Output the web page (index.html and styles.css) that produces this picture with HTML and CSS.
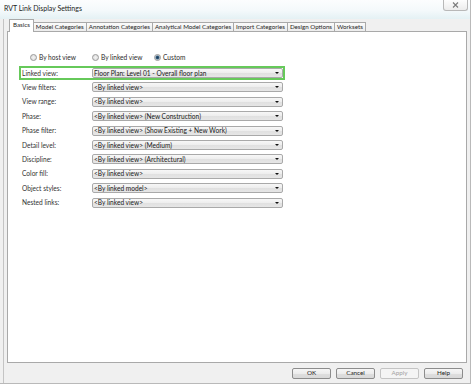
FILE: index.html
```html
<!DOCTYPE html>
<html>
<head>
<meta charset="utf-8">
<title>RVT Link Display Settings</title>
<link rel="stylesheet" href="styles.css">
</head>
<body>
<div class="window">
  <div class="titlebar">
    <span class="title">RVT Link Display Settings</span>
    <div class="close">
      <svg width="9" height="6" viewBox="0 0 9 6"><path d="M2 0.5 L7 5.5 M7 0.5 L2 5.5" stroke="#7a7a7a" stroke-width="1.1" fill="none"/></svg>
    </div>
  </div>
  <div class="main">
    <div class="tabs">
      <div class="tab active">Basics</div>
      <div class="tab">Model Categories</div>
      <div class="tab">Annotation Categories</div>
      <div class="tab">Analytical Model Categories</div>
      <div class="tab">Import Categories</div>
      <div class="tab">Design Options</div>
      <div class="tab">Worksets</div>
    </div>
    <div class="panel">
      <div class="radios">
        <div class="radio-item"><span class="radio"></span><span>By host view</span></div>
        <div class="radio-item"><span class="radio"></span><span>By linked view</span></div>
        <div class="radio-item"><span class="radio checked"></span><span>Custom</span></div>
      </div>
      <div class="rows">
        <div class="row hl"><span class="label">Linked view:</span><div class="combo"><span>Floor Plan: Level 01 - Overall floor plan</span><span class="arrow"></span></div></div>
        <div class="row"><span class="label">View filters:</span><div class="combo"><span>&lt;By linked view&gt;</span><span class="arrow"></span></div></div>
        <div class="row"><span class="label">View range:</span><div class="combo"><span>&lt;By linked view&gt;</span><span class="arrow"></span></div></div>
        <div class="row"><span class="label">Phase:</span><div class="combo"><span>&lt;By linked view&gt; (New Construction)</span><span class="arrow"></span></div></div>
        <div class="row"><span class="label">Phase filter:</span><div class="combo"><span>&lt;By linked view&gt; (Show Existing + New Work)</span><span class="arrow"></span></div></div>
        <div class="row"><span class="label">Detail level:</span><div class="combo"><span>&lt;By linked view&gt; (Medium)</span><span class="arrow"></span></div></div>
        <div class="row"><span class="label">Discipline:</span><div class="combo"><span>&lt;By linked view&gt; (Architectural)</span><span class="arrow"></span></div></div>
        <div class="row"><span class="label">Color fill:</span><div class="combo"><span>&lt;By linked view&gt;</span><span class="arrow"></span></div></div>
        <div class="row"><span class="label">Object styles:</span><div class="combo"><span>&lt;By linked model&gt;</span><span class="arrow"></span></div></div>
        <div class="row"><span class="label">Nested links:</span><div class="combo"><span>&lt;By linked view&gt;</span><span class="arrow"></span></div></div>
      </div>
    </div>
    <div class="buttons">
      <div class="btn">OK</div>
      <div class="btn">Cancel</div>
      <div class="btn disabled">Apply</div>
      <div class="btn">Help</div>
    </div>
  </div>
</div>
</body>
</html>
```
FILE: styles.css
```css
* { box-sizing: border-box; }
html, body { margin: 0; padding: 0; }
body {
  width: 474px;
  height: 389px;
  background: #ffffff;
  font-family: "Lato", "Open Sans", sans-serif;
  font-size: 6.6px;
  line-height: 1;
  color: #1e1e1e;
  overflow: hidden;
}
.window {
  width: 471px;
  height: 384px;
  background: #f0f0f0;
  display: flex;
  flex-direction: column;
  border-right: 1px solid #b9b9b9;
  border-bottom: 1px solid #b9b9b9;
}
.titlebar {
  height: 19px;
  flex: none;
  display: flex;
  align-items: flex-start;
  justify-content: space-between;
  background: linear-gradient(#fcfdfe, #f4f9fb 55%, #e4f1f4);
}
.title {
  padding: 5px 0 0 4px;
  font-size: 7px;
  color: #222;
}
.close {
  width: 25px;
  height: 11px;
  margin-right: 2px;
  border: 1px solid #b8b8b8;
  border-top: none;
  border-radius: 0 0 3px 3px;
  background: linear-gradient(#fdfdfd, #ececec);
  display: flex;
  align-items: center;
  justify-content: center;
}
.main {
  flex: 1;
  margin-left: 3px;
  border-left: 1px solid #c4c4c4;
  padding: 0 3px;
  display: flex;
  flex-direction: column;
}
.tabs {
  height: 13px;
  flex: none;
  display: flex;
  align-items: flex-end;
  padding-left: 2px;
  margin-bottom: -1px;
  position: relative;
  z-index: 1;
}
.tab {
  height: 9px;
  margin-bottom: 1px;
  padding: 0 2px;
  display: flex;
  align-items: center;
  border: 1px solid #a9a9a9;
  border-bottom: none;
  border-left: none;
  background: linear-gradient(#fbfbfb, #ececec);
  font-size: 6.2px;
  color: #1e1e1e;
  white-space: nowrap;
}
.tab.active {
  height: 13px;
  margin-bottom: 0;
  border-left: 1px solid #a9a9a9;
  background: #ffffff;
  padding: 0 3px 2px;
}
.panel {
  height: 332px;
  flex: none;
  background: #ffffff;
  border: 1px solid #a9a9a9;
}
.radios {
  display: flex;
  align-items: center;
  height: 8px;
  margin: 21px 0 5px 22px;
  color: #2a2a2a;
}
.radio-item {
  display: flex;
  align-items: center;
  gap: 2px;
  width: 62px;
}
.radio {
  width: 7px;
  height: 7px;
  border-radius: 50%;
  border: 1px solid #999;
  background: radial-gradient(circle, #f2f2f2 0, #dadada 100%);
}
.radio.checked {
  background: radial-gradient(circle, #1d3a55 0, #2b5375 1.3px, #8ea7bd 2px, #e6e6e6 2.6px);
}
.rows {
  display: flex;
  flex-direction: column;
  gap: 0.4px;
  margin-left: 11px;
  width: 266px;
}
.row {
  display: flex;
  align-items: center;
  height: 14px;
  border: 2px solid transparent;
  padding-left: 1px;
}
.row.hl {
  border-color: #66c95a;
}
.label {
  width: 70px;
  flex: none;
  color: #333;
}
.combo {
  flex: 1;
  height: 10px;
  border: 1px solid #a9a9a9;
  border-radius: 2px;
  background: linear-gradient(#f7f7f7, #ededed 50%, #e0e0e0 51%, #e6e6e6);
  display: flex;
  align-items: center;
  justify-content: space-between;
  padding: 0 3px 0 1px;
  color: #1a1a1a;
  white-space: nowrap;
}
.arrow {
  width: 0;
  height: 0;
  border-left: 2px solid transparent;
  border-right: 2px solid transparent;
  border-top: 2.5px solid #111;
}
.buttons {
  display: flex;
  justify-content: flex-end;
  gap: 5px;
  padding: 5px 4px 0 0;
}
.btn {
  width: 39px;
  height: 11px;
  border: 1px solid #8c8c8c;
  border-radius: 2px;
  background: linear-gradient(#f6f6f6, #ececec 50%, #dedede 51%, #d9d9d9);
  display: flex;
  align-items: center;
  justify-content: center;
  font-size: 6.3px;
  color: #1e1e1e;
}
.btn.disabled {
  color: #a3a3a3;
  border-color: #c4c4c4;
  background: #f4f4f4;
}
```
